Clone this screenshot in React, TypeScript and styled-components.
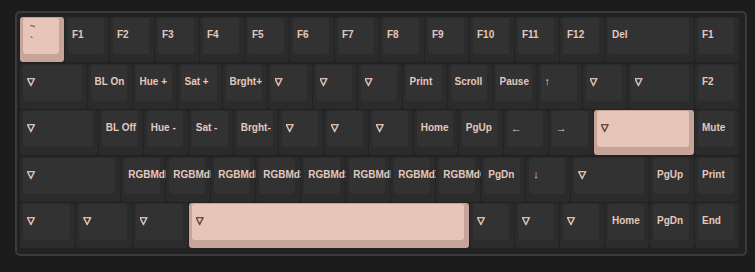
import React from "react";
import styled, { createGlobalStyle } from "styled-components";

const U = 45;

const GlobalStyle = createGlobalStyle`
  html, body { margin: 0; padding: 0; background: #1c1c1c; }
  body { font-family: "Liberation Sans", Arial, sans-serif; }
`;

const Page = styled.div`
  padding: 11px 0 0 15px;
  width: 755px;
  height: 272px;
  box-sizing: border-box;
`;

const Board = styled.div`
  width: 732px;
  box-sizing: border-box;
  border: 2px solid #3a3a3a;
  border-radius: 5px;
  background: #222222;
  padding: 4px 5px 6px 3px;
  display: flex;
  flex-direction: column;
  gap: 1.5px;
`;

const Row = styled.div`
  display: flex;
  height: 45px;
`;

const Key = styled.div<{ $u: number; $pink?: boolean }>`
  width: ${(p) => p.$u * U - 1}px;
  margin-right: 1px;
  height: 45px;
  box-sizing: border-box;
  padding: 1px 5px 8px 3px;
  border-radius: 3px;
  background: ${(p) => (p.$pink ? "#c6a499" : "#2b2b2b")};
  display: flex;
`;

const Face = styled.div<{ $pink?: boolean }>`
  flex: 1;
  border-radius: 3px;
  background: ${(p) => (p.$pink ? "#e7c5b9" : "#323232")};
  display: flex;
  align-items: center;
  padding: 0 0 3px 4px;
  min-width: 0;
`;

const Label = styled.span<{ $pink?: boolean; $sym?: boolean }>`
  display: block;
  overflow: hidden;
  white-space: nowrap;
  width: calc(100% + 6px);
  flex: none;
  font-size: 10px;
  font-weight: bold;
  color: ${(p) => (p.$pink ? "#5a3f38" : "#e2c8bf")};
  font-family: ${(p) =>
    p.$sym ? '"DejaVu Sans", sans-serif' : '"Liberation Sans", Arial, sans-serif'};
  ${(p) => (p.$sym ? "-webkit-text-stroke: 0.6px currentColor;" : "")}
`;

const Arrow = styled.span`
  display: block;
  font-family: "Liberation Sans", Arial, sans-serif;
  font-size: 11px;
  color: #e2c8bf;
`;

const Stack = styled.div`
  display: flex;
  flex-direction: column;
  align-self: flex-start;
  gap: 5px;
  padding: 4px 0 0 3px;
  font-family: "Liberation Sans", Arial, sans-serif;
  font-size: 9px;
  font-weight: bold;
  color: #5a3f38;
  line-height: 1;
`;

type K = { l: string; u?: number; p?: boolean; s?: string };

const T = "▽";
const k = (l: string, u = 1, p = false): K => ({ l, u, p });

const rows: K[][] = [
  [
    { l: "~", s: "`", u: 1, p: true },
    ...["F1", "F2", "F3", "F4", "F5", "F6", "F7", "F8", "F9", "F10", "F11", "F12"].map((x) => k(x)),
    k("Del", 2),
    k("F1"),
  ],
  [
    k(T, 1.5),
    k("BL On"),
    k("Hue +"),
    k("Sat +"),
    k("Brght+"),
    k(T),
    k(T),
    k(T),
    k("Print"),
    k("Scroll"),
    k("Pause"),
    k("↑"),
    k(T),
    k(T, 1.5),
    k("F2"),
  ],
  [
    k(T, 1.75),
    k("BL Off"),
    k("Hue -"),
    k("Sat -"),
    k("Brght-"),
    k(T),
    k(T),
    k(T),
    k("Home"),
    k("PgUp"),
    k("←"),
    k("→"),
    k(T, 2.25, true),
    k("Mute"),
  ],
  [
    k(T, 2.25),
    k("RGBMdP"),
    k("RGBMdB"),
    k("RGBMdR"),
    k("RGBMdSW"),
    k("RGBMdSN"),
    k("RGBMdK"),
    k("RGBMdX"),
    k("RGBMdG"),
    k("PgDn"),
    k("↓"),
    k(T, 1.75),
    k("PgUp"),
    k("Print"),
  ],
  [
    k(T, 1.25),
    k(T, 1.25),
    k(T, 1.25),
    k(T, 6.25, true),
    k(T),
    k(T),
    k(T),
    k("Home"),
    k("PgDn"),
    k("End"),
  ],
];

const isArrow = (l: string) => "↑↓←→".includes(l);

export default function App() {
  return (
    <>
      <GlobalStyle />
      <Page>
        <Board>
          {rows.map((r, i) => (
            <Row key={i}>
              {r.map((key, j) => (
                <Key key={j} $u={key.u ?? 1} $pink={key.p}>
                  <Face $pink={key.p}>
                    {key.s ? (
                      <Stack>
                        <span>{key.l}</span>
                        <span>{key.s}</span>
                      </Stack>
                    ) : isArrow(key.l) ? (
                      <Arrow>{key.l}</Arrow>
                    ) : (
                      <Label $pink={key.p} $sym={key.l === T}>
                        {key.l}
                      </Label>
                    )}
                  </Face>
                </Key>
              ))}
            </Row>
          ))}
        </Board>
      </Page>
    </>
  );
}
